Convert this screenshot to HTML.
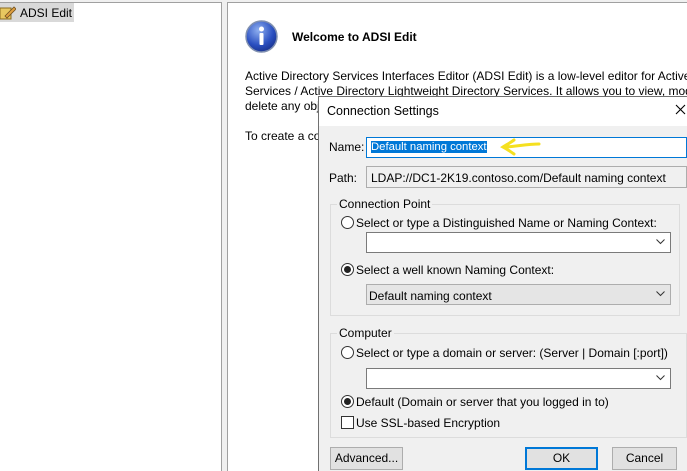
<!DOCTYPE html>
<html><head><meta charset="utf-8"><style>
*{box-sizing:border-box}
body{margin:0;width:687px;height:471px;overflow:hidden;background:#f0f0f0;font-family:"Liberation Sans",sans-serif;font-size:12px;color:#000;position:relative}
.a{position:absolute}
.t{position:absolute;white-space:nowrap;line-height:14px}
.combo{position:absolute;background:#fff;border:1px solid #7a7a7a}
.chev{position:absolute;right:5px;top:6px}
.radio{position:absolute;width:13px;height:13px;border:1px solid #333;border-radius:50%;background:#fff}
.radio.on::after{content:"";position:absolute;left:2px;top:2px;width:7px;height:7px;border-radius:50%;background:#222}
.btn{position:absolute;background:#e1e1e1;border:1px solid #adadad;text-align:center;line-height:20px}
.grp{position:absolute;border:1px solid #dcdcdc}
.gl{position:absolute;top:-8px;left:6px;background:#f0f0f0;padding:0 2px;line-height:14px}
</style></head><body>
<div class="a" style="left:0;top:2px;width:222px;height:469px;background:#fff;border-right:1px solid #a0a0a0;border-top:1px solid #a0a0a0"></div>
<div class="a" style="left:0;top:3px;width:74px;height:19px;background:#d9d9d9"></div>
<svg class="a" style="left:0;top:5px" width="16" height="15"><rect x="0" y="3" width="11" height="11" fill="#e8c860" stroke="#8a6a20"/><path d="M5 11 L14 2 L16 4 L7 13 Z" fill="#e0a040" stroke="#705020" stroke-width=".8"/></svg>
<div class="t" style="left:20px;top:6px">ADSI Edit</div>
<div class="a" style="left:227px;top:2px;width:460px;height:469px;background:#fff;border-left:1px solid #a0a0a0;border-top:1px solid #a0a0a0"></div>
<svg class="a" style="left:245px;top:20px" width="33" height="33"><defs><radialGradient id="g" cx=".4" cy=".3" r=".8"><stop offset="0" stop-color="#8fb0f0"/><stop offset=".6" stop-color="#2a4fc0"/><stop offset="1" stop-color="#142a80"/></radialGradient></defs><circle cx="16.5" cy="16.5" r="15.5" fill="url(#g)" stroke="#8090b0" stroke-width="1.5"/><circle cx="16.5" cy="9" r="2.5" fill="#fff"/><rect x="14.5" y="13" width="4" height="12" rx="1" fill="#fff"/></svg>
<div class="t" style="left:292px;top:30px;font-weight:bold">Welcome to ADSI Edit</div>
<div class="t" style="left:245px;top:69px">Active Directory Services Interfaces Editor (ADSI Edit) is a low-level editor for Active D</div>
<div class="t" style="left:245px;top:84px">Services / Active Directory Lightweight Directory Services. It allows you to view, mod</div>
<div class="t" style="left:245px;top:99px">delete any obj</div>
<div class="t" style="left:245px;top:129px">To create a co</div>
<div class="a" style="left:318px;top:96px;width:369px;height:375px;background:#f0f0f0;border-left:1px solid #707070;border-top:1px solid #707070"></div>
<div class="a" style="left:319px;top:97px;width:368px;height:29px;background:#fff"></div>
<div class="t" style="left:327px;top:104px;font-size:12.5px">Connection Settings</div>
<svg class="a" style="left:675px;top:104px" width="11" height="11"><path d="M1 1L10 10M10 1L1 10" stroke="#000" stroke-width="1.1"/></svg>
<div class="t" style="left:329px;top:140px">Name:</div>
<div class="a" style="left:366px;top:137px;width:321px;height:21px;background:#fff;border:1px solid #0078d7"></div>
<div class="t" style="left:371px;top:140px;font-size:11.3px"><span style="background:#0078d7;color:#fff">Default naming context</span></div>
<svg class="a" style="left:496px;top:137px" width="45" height="20"><path d="M43 7 C33 7 22 9 10 10 M18 3 C14 6 10 8 7 10 C11 12 15 15 18 17" stroke="#f5e020" stroke-width="3" fill="none" stroke-linecap="round"/></svg>
<div class="t" style="left:329px;top:171px">Path:</div>
<div class="a" style="left:366px;top:166px;width:321px;height:22px;background:#f0f0f0;border:1px solid #adadad"></div>
<div class="t" style="left:371px;top:171px">LDAP://DC1-2K19.contoso.com/Default naming context</div>
<div class="grp" style="left:330px;top:204px;width:350px;height:112px"><span class="gl">Connection Point</span></div>
<div class="radio" style="left:341px;top:216px"></div>
<div class="t" style="left:356px;top:216px">Select or type a Distinguished Name or Naming Context:</div>
<div class="combo" style="left:366px;top:232px;width:305px;height:21px"><svg class="chev" width="9" height="6"><path d="M0.5 0.5L4.5 4.5L8.5 0.5" stroke="#333" fill="none"/></svg></div>
<div class="radio on" style="left:341px;top:263px"></div>
<div class="t" style="left:356px;top:263px">Select a well known Naming Context:</div>
<div class="combo" style="left:366px;top:284px;width:305px;height:21px;background:#e5e5e5;border-color:#adadad"><svg class="chev" width="9" height="6"><path d="M0.5 0.5L4.5 4.5L8.5 0.5" stroke="#333" fill="none"/></svg></div>
<div class="t" style="left:369px;top:289px">Default naming context</div>
<div class="grp" style="left:330px;top:333px;width:357px;height:105px"><span class="gl">Computer</span></div>
<div class="radio" style="left:341px;top:346px"></div>
<div class="t" style="left:356px;top:346px">Select or type a domain or server: (Server | Domain [:port])</div>
<div class="combo" style="left:366px;top:368px;width:305px;height:21px"><svg class="chev" width="9" height="6"><path d="M0.5 0.5L4.5 4.5L8.5 0.5" stroke="#333" fill="none"/></svg></div>
<div class="radio on" style="left:341px;top:395px"></div>
<div class="t" style="left:356px;top:395px">Default (Domain or server that you logged in to)</div>
<div class="a" style="left:341px;top:416px;width:13px;height:13px;border:1px solid #333;background:#fff"></div>
<div class="t" style="left:356px;top:416px">Use SSL-based Encryption</div>
<div class="btn" style="left:330px;top:447px;width:73px;height:23px">Advanced...</div>
<div class="btn" style="left:525px;top:447px;width:73px;height:23px;border:2px solid #0078d7;line-height:19px">OK</div>
<div class="btn" style="left:612px;top:447px;width:65px;height:23px">Cancel</div>
</body></html>
